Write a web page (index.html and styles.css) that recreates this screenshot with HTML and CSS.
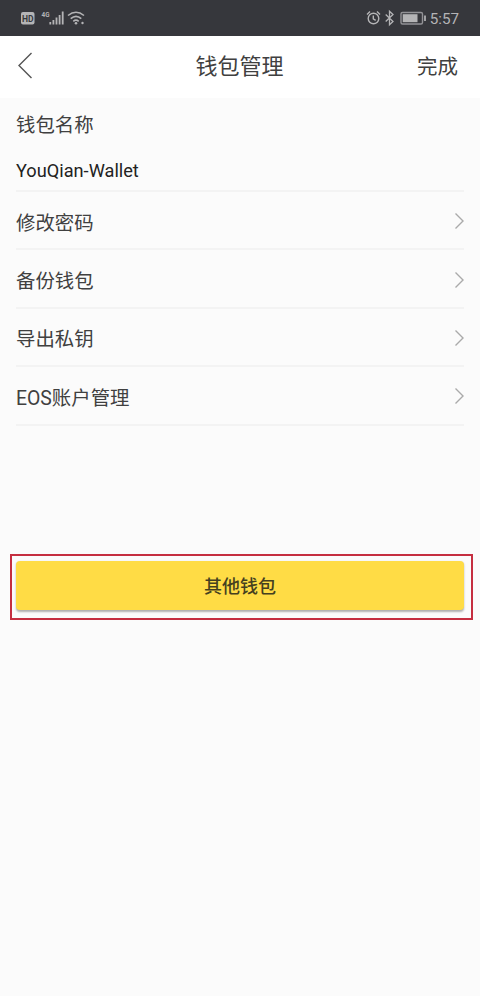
FILE: index.html
```html
<!DOCTYPE html>
<html lang="zh-CN">
<head>
<meta charset="utf-8">
<title>钱包管理</title>
<link rel="stylesheet" href="styles.css">
</head>
<body>
<div class="status">
  <svg class="status-left" width="70" height="20" viewBox="0 0 70 20" fill="none">
    <rect x="1" y="4" width="13.5" height="12.5" rx="2" fill="#b4b4b6"/>
    <text class="hd" x="1.9" y="13.5">HD</text>
    <text class="net" x="21.500" y="9.400" textLength="8" lengthAdjust="spacingAndGlyphs">4G</text>
    <path d="M30.300 14v2.500M33.400 12v4.500M36.500 9.500v7M39.600 7v9.500M42.700 3.500v13" stroke="#b4b4b6" stroke-width="1.800"/>
    <path d="M48 7.500q8-6.500 16 0M50.700 10.600q5.300-4.600 10.600 0M53.300 13.300q2.700-2.200 5.400 0" stroke="#b4b4b6" stroke-width="1.600"/>
    <circle cx="56" cy="15.300" r="1.300" fill="#b4b4b6"/><circle cx="62.500" cy="15" r="1.200" fill="#b4b4b6"/>
  </svg>
  <div class="status-right">
    <svg width="60" height="20" viewBox="0 0 60 20" fill="none" stroke="#b4b4b6" stroke-width="1.400">
      <circle cx="7.500" cy="10.500" r="5.300"/>
      <path d="M7.300 7.500v3.300l2.400 1.500M1 6.500l3-3M14 6.500l-3-3"/>
      <path d="M19.700 6.500l7.300 7-3.500 3.300V3.200L27 6.500l-7.300 7" stroke-width="1.300"/>
      <rect x="35" y="4.500" width="21.500" height="11.500" rx="1.500" stroke="#929296"/>
      <path d="M36.700 6.200h14.800v8H36.700z" fill="#b4b4b6" stroke="none"/>
      <path d="M59 7.500v5.500" stroke-width="1.700"/>
    </svg>
    <span class="time">5:57</span>
  </div>
</div>
<header class="nav">
  <svg class="back" width="16" height="28" viewBox="0 0 16 28"><path d="M14.500 1L2 13.500l12.500 12.500"/></svg>
  <h1 class="title">钱包管理</h1>
  <span class="done">完成</span>
</header>
<main class="content">
  <section class="name">
    <div class="label">钱包名称</div>
    <div class="value">YouQian-Wallet</div>
  </section>
  <div class="row"><span>修改密码</span><svg class="arrow" width="10" height="18" viewBox="0 0 10 18"><path d="M1.500 1.500L9 9l-7.500 7.500"/></svg></div>
  <div class="row"><span>备份钱包</span><svg class="arrow" width="10" height="18" viewBox="0 0 10 18"><path d="M1.500 1.500L9 9l-7.500 7.500"/></svg></div>
  <div class="row"><span>导出私钥</span><svg class="arrow" width="10" height="18" viewBox="0 0 10 18"><path d="M1.500 1.500L9 9l-7.500 7.500"/></svg></div>
  <div class="row"><span>EOS账户管理</span><svg class="arrow" width="10" height="18" viewBox="0 0 10 18"><path d="M1.500 1.500L9 9l-7.500 7.500"/></svg></div>
</main>
<div class="highlight"><button class="button">其他钱包</button></div>
</body>
</html>
```
FILE: styles.css
```css
* { box-sizing: border-box; }
body {
  margin: 0;
  min-height: 996px;
  background: #fbfbfb;
  color: #404040;
  font-family: Roboto, "Noto Sans CJK SC", sans-serif;
}
.status {
  height: 36px;
  padding: 0 21px 0 20px;
  display: flex;
  align-items: center;
  justify-content: space-between;
  background: #36373c;
  color: #b4b4b6;
}
.status-right { display: flex; align-items: center; gap: 4px; }
.time { padding-top: 1px; font-size: 15.2px; line-height: 20px; }
.hd { font: bold 8.5px Roboto, sans-serif; fill: #36373c; }
.net { font: bold 8px Roboto, sans-serif; fill: #b4b4b6; }
.nav {
  height: 62px;
  padding: 0 22px 0 17px;
  display: grid;
  grid-template-columns: 1fr auto 1fr;
  align-items: center;
  background: #fff;
}
.back { fill: none; stroke: #555; stroke-width: 1.4; margin-bottom: 2px; }
.title { margin: 0; padding-left: 4px; font-size: 22px; line-height: 32px; font-weight: 400; }
.done { justify-self: end; font-size: 20.5px; line-height: 32px; }
.content { padding: 0 16px; }
.name { height: 94px; padding-top: 13px; border-bottom: 2px solid #f3f3f3; }
.label { font-size: 19.4px; line-height: 30px; }
.value { margin-top: 16px; font-size: 18.2px; line-height: 28px; color: #222; }
.row {
  height: 58.4px;
  padding-top: 2px;
  display: flex;
  align-items: center;
  justify-content: space-between;
  border-bottom: 2px solid #f3f3f3;
  font-size: 19.4px;
}
.arrow { fill: none; stroke: #aaa; stroke-width: 1.4; }
.highlight {
  margin: 128.4px 7px 0 10px;
  height: 66px;
  padding: 5px 7px 8px 4px;
  border: 2px solid #c52e40;
}
.button {
  display: block;
  width: 100%;
  height: 49px;
  padding: 2px 0 0;
  border: 0;
  border-radius: 4px;
  background: #ffdc45;
  box-shadow: 0 1.5px 2px rgba(0, 0, 0, .3);
  color: #45401f;
  font: 500 18px/47px Roboto, "Noto Sans CJK SC", sans-serif;
}
```
